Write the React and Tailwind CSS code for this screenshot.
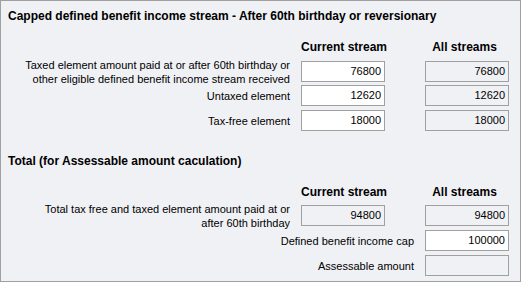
import React from 'react';

function Box({ value, white }) {
  return (
    <div
      className={`h-[21px] border border-[#a0a0a0] flex items-center justify-end pr-[3px] text-[11px] leading-none text-black ${
        white ? 'bg-white' : 'bg-[#f0f1f5]'
      }`}
    >
      {value}
    </div>
  );
}

function Row({ label, current, all, className = '' }) {
  return (
    <div className={`grid grid-cols-[1fr_84px_40px_84px] grid-rows-[21px] items-center ${className}`}>
      <div className="text-right pr-[11px] text-[11px] leading-[14px]">{label}</div>
      {current}
      <div />
      {all}
    </div>
  );
}

function Headers({ className = '' }) {
  return (
    <div className={`grid grid-cols-[1fr_84px_40px_84px] text-[12px] font-bold leading-[14px] ${className}`}>
      <div />
      <div className="text-center whitespace-nowrap">Current stream</div>
      <div />
      <div className="text-center whitespace-nowrap pr-[5px]">All streams</div>
    </div>
  );
}

export default function App() {
  return (
    <div className="w-[521px] h-[282px] border border-[#a0a0a0] bg-[#f0f1f5] pl-[7px] pr-[11px] text-black font-['Liberation_Sans',Arial,sans-serif]">
      <div className="mt-[8px] text-[12px] font-bold leading-[14px]">
        Capped defined benefit income stream - After 60th birthday or reversionary
      </div>
      <Headers className="mt-[17px]" />
      <Row
        className="mt-[7px]"
        label={
          <>
            Taxed element amount paid at or after 60th birthday or
            <br />
            other eligible defined benefit income stream received
          </>
        }
        current={<Box value="76800" white />}
        all={<Box value="76800" />}
      />
      <Row
        className="mt-[3px]"
        label="Untaxed element"
        current={<Box value="12620" white />}
        all={<Box value="12620" />}
      />
      <Row
        className="mt-[4px]"
        label="Tax-free element"
        current={<Box value="18000" white />}
        all={<Box value="18000" />}
      />

      <div className="mt-[23px] text-[12px] font-bold leading-[14px]">
        Total (for Assessable amount caculation)
      </div>
      <Headers className="mt-[17px]" />
      <Row
        className="mt-[6px]"
        label={
          <>
            Total tax free and taxed element amount paid at or
            <br />
            after 60th birthday
          </>
        }
        current={<Box value="94800" />}
        all={<Box value="94800" />}
      />
      <div className="grid grid-cols-[1fr_84px] grid-rows-[21px] items-center mt-[4px]">
        <div className="text-right pr-[11px] text-[11px] leading-[14px]">Defined benefit income cap</div>
        <Box value="100000" white />
      </div>
      <div className="grid grid-cols-[1fr_84px] grid-rows-[21px] items-center mt-[4px]">
        <div className="text-right pr-[11px] text-[11px] leading-[14px]">Assessable amount</div>
        <Box value="" />
      </div>
    </div>
  );
}
